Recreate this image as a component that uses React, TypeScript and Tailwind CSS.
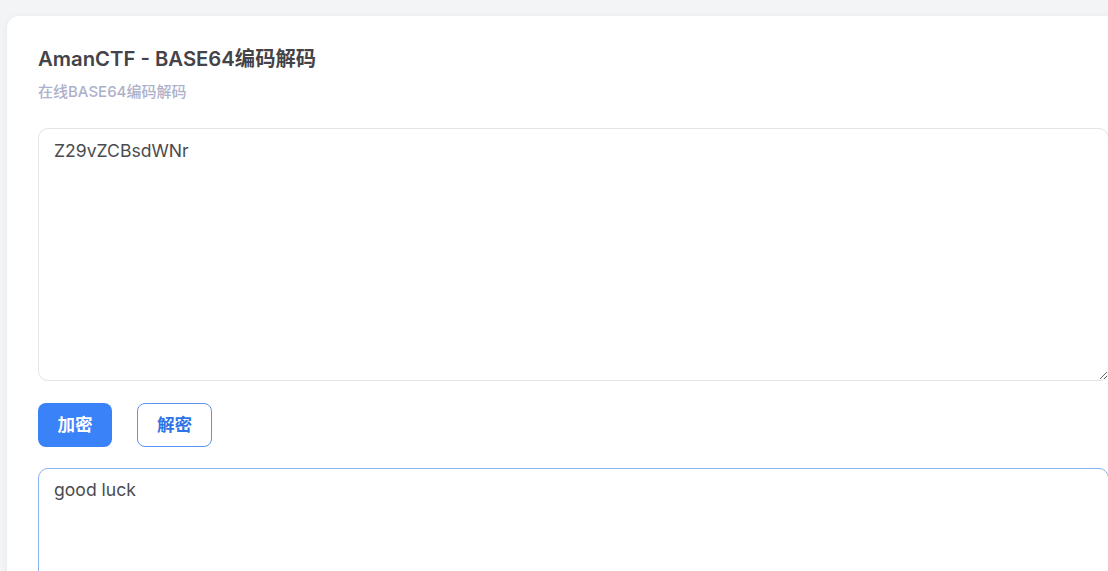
import React, { useState } from 'react';

export default function App() {
  const [input, setInput] = useState('Z29vZCBsdWNr');
  const [output, setOutput] = useState('good luck');

  const encode = () => {
    try {
      setOutput(btoa(unescape(encodeURIComponent(input))));
    } catch (e) {
      setOutput('');
    }
  };

  const decode = () => {
    try {
      setOutput(decodeURIComponent(escape(atob(input))));
    } catch (e) {
      setOutput('解码失败');
    }
  };

  return (
    <div
      className="h-[571px] w-full overflow-hidden bg-[#f3f4f6] pl-[7px] pt-4"
      style={{ fontFamily: 'Inter, "Noto Sans CJK SC", sans-serif' }}
    >
      {/* Card */}
      <div className="w-[1133px] rounded-xl bg-white px-[31px] pt-[29px] pb-10 shadow-[0_1px_6px_rgba(0,0,0,0.06)]">
        <h1 className="text-[20.3px] leading-7 font-semibold text-[#434349]">AmanCTF - BASE64编码解码</h1>
        <p className="mt-[9px] text-[15px] leading-5 font-medium text-[#adb0ca]">在线BASE64编码解码</p>

        <textarea
          value={input}
          onChange={(e) => setInput(e.target.value)}
          className="mt-[26px] block h-[253px] w-full rounded-[10px] border border-[#e4e4e7] px-[15px] py-[10px] text-[17.6px] leading-6 text-[#4b4b4f] outline-none"
        />

        <div className="mt-[22px] flex gap-[25px]">
          <button
            onClick={encode}
            className="h-11 w-[74px] rounded-lg bg-[#3a82f7] text-[17.6px] font-bold text-white"
          >
            加密
          </button>
          <button
            onClick={decode}
            className="h-11 w-[75px] rounded-lg border border-[#5b93f5] bg-white text-[17.6px] font-bold text-[#2f74e6]"
          >
            解密
          </button>
        </div>

        <textarea
          value={output}
          onChange={(e) => setOutput(e.target.value)}
          className="mt-[21px] block h-[253px] w-full rounded-[10px] border border-[#8ab0f6] px-[15px] py-[9px] text-[17.6px] leading-6 text-[#4b4b4f] outline-none"
        />
      </div>
    </div>
  );
}
